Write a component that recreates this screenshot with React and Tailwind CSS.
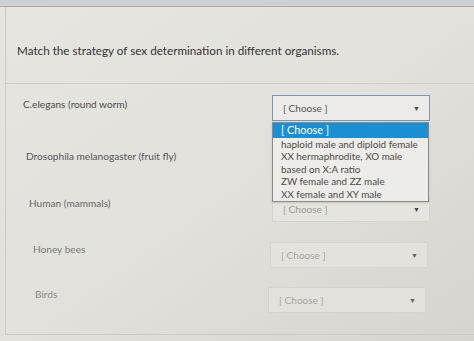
import { useState } from 'react';

const OPTIONS = [
  'haploid male and diploid female',
  'XX hermaphrodite, XO male',
  'based on X:A ratio',
  'ZW female and ZZ male',
  'XX female and XY male',
];

// label/select offsets drift a little row by row, like the photographed screen
const ROWS = [
  { label: 'C.elegans (round worm)', h: 'h-[52px]', col: 'w-[266px] pl-[17px]', text: 'text-[#4a4a4a]', open: true },
  { label: 'Drosophila melanogaster (fruit fly)', h: 'h-[47px]', col: 'w-[266px] pl-[20px]', text: 'text-[#555]', covered: true },
  { label: 'Human (mammals)', h: 'h-[46px]', col: 'w-[266px] pl-[23px]', text: 'text-[#666]' },
  { label: 'Honey bees', h: 'h-[45px]', col: 'w-[264px] pl-[27px]', text: 'text-[#7a7a7a]' },
  { label: 'Birds', h: 'h-[46px]', col: 'w-[262px] pl-[29px]', text: 'text-[#8a8a8a]' },
];

function Select({ open, muted }) {
  return (
    <div className="relative">
      <div
        className={`flex h-[26px] w-[158px] items-center justify-between border pl-[10px] pr-[9px] ${
          open ? 'border-[#7c95b3] bg-[#ecebe7]' : 'border-[#d6d4cf] bg-[#e6e4df]'
        }`}
      >
        <span className={`text-[10px] ${muted ? 'text-[#9a9a9a]' : 'text-[#555]'}`}>[ Choose ]</span>
        <span className="text-[7px] text-[#444]">▼</span>
      </div>
      {open && (
        <div className="absolute left-0 top-[27px] z-10 w-[157px] border border-[#8a8a8a] bg-[#edece8] text-[9.9px] leading-[12.6px] text-[#4a4a4a] shadow-sm">
          <div className="bg-[#1b8fd2] px-[8px] py-[1px] text-[10.8px] text-white">[ Choose ]</div>
          {OPTIONS.map((o) => (
            <div key={o} className="whitespace-nowrap px-[8px]">
              {o}
            </div>
          ))}
        </div>
      )}
    </div>
  );
}

export default function App() {
  const [rows] = useState(ROWS);
  return (
    <div
      className="h-[341px] w-[474px] overflow-hidden bg-gradient-to-br from-[#e7e5e0] via-[#e3e1dc] to-[#d6d4cf]"
      style={{ fontFamily: 'Lato, "Open Sans", sans-serif' }}
    >
      <div className="h-[7px] border-b border-[#a9a9a9] bg-[#cfd0d2]" />
      <div className="ml-[5px] h-[328px] border-b border-l border-[#cdcbc6]">
        <div className="h-[77px] border-b border-[#d0cec9] pl-[11px] pt-[35px]">
          <h1 className="text-[11.7px] font-normal text-[#333]">
            Match the strategy of sex determination in different organisms.
          </h1>
        </div>
        <div className="pt-[11px]">
          {rows.map((r, i) => (
            <div key={r.label} className={`flex ${r.h}`}>
              <div className={`${r.col} shrink-0 whitespace-nowrap pt-[2px] text-[10.1px] ${r.text}`}>
                {r.label}
              </div>
              {/* the fruit-fly select sits fully under the open list */}
              <div className={`${i === 0 ? '' : 'pt-[2px]'} ${i > 2 ? 'opacity-80' : ''} ${r.covered ? 'invisible' : ''}`}>
                <Select open={r.open} muted={i > 0} />
              </div>
            </div>
          ))}
        </div>
      </div>
    </div>
  );
}
